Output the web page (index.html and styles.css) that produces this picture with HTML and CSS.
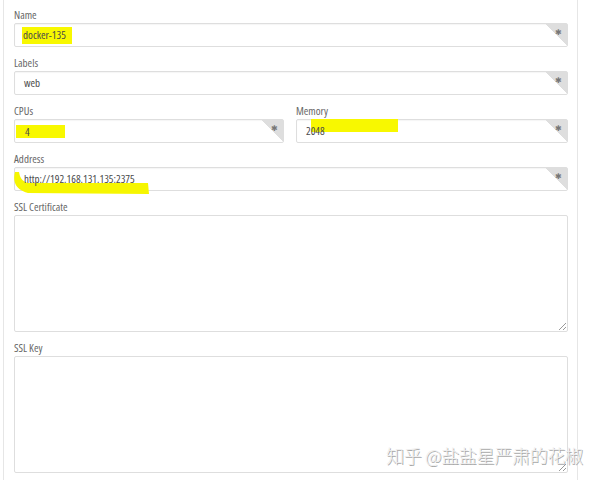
FILE: index.html
```html
<!DOCTYPE html>
<html>
<head>
<meta charset="utf-8">
<link rel="stylesheet" href="styles.css">
</head>
<body>
<div class="page">
  <div class="panel">
    <div class="field">
      <label class="label">Name</label>
      <div class="input required"><span class="hl hl-name">docker-135</span></div>
    </div>
    <div class="field">
      <label class="label">Labels</label>
      <div class="input required">web</div>
    </div>
    <div class="row">
      <div class="field">
        <label class="label">CPUs</label>
        <div class="input required"><span class="hl hl-cpu">4</span></div>
      </div>
      <div class="field">
        <label class="label">Memory</label>
        <div class="input required"><span class="hl-mem"></span><span class="mem-val">2048</span></div>
      </div>
    </div>
    <div class="field">
      <label class="label">Address</label>
      <div class="input required">
        <svg class="swoosh" width="150" height="32" viewBox="0 0 150 32"><path d="M3 2 C 1 10, 2 19, 16 23 L 137 24 L 136 13 L 16 13 C 10 11, 8 8, 7 2 Z" fill="#f6f600"/></svg>
        <span class="addr">http://192.168.131.135:2375</span>
      </div>
    </div>
    <div class="field">
      <label class="label">SSL Certificate</label>
      <div class="textarea"><span class="grip"></span></div>
    </div>
    <div class="field">
      <label class="label">SSL Key</label>
      <div class="textarea"><span class="grip"></span></div>
    </div>
  </div>
  <div class="watermark">知乎 @盐盐星严肃的花椒</div>
</div>
</body>
</html>
```
FILE: styles.css
```css
html, body {
  margin: 0;
  padding: 0;
  background: #fff;
}
body {
  font-family: "Open Sans", "Liberation Sans", sans-serif;
  font-stretch: 85%;
  color: #333;
}
.page {
  position: relative;
  width: 600px;
  height: 480px;
  overflow: hidden;
}
.panel {
  margin-left: 3px;
  width: 575px;
  height: 480px;
  box-sizing: border-box;
  border-left: 1px solid #e6e6e6;
  border-right: 1px solid #e6e6e6;
  padding: 7px 9px 0 10px;
  display: flex;
  flex-direction: column;
  gap: 8px;
}
.row {
  display: flex;
  gap: 12px;
}
.row .field {
  flex: 1;
}
.row .field:first-child {
  flex: 0 0 270px;
}
.field {
  display: flex;
  flex-direction: column;
}
.label {
  height: 16px;
  line-height: 16px;
  font-size: 11px;
  color: #666;
}
.input {
  position: relative;
  height: 24px;
  box-sizing: border-box;
  border: 1px solid #dedede;
  border-radius: 2px;
  box-shadow: inset 0 1px 1px rgba(0,0,0,0.04);
  padding: 0 9px;
  font-size: 11px;
  line-height: 22px;
  color: #4a4a4a;
  display: flex;
  align-items: center;
}
.required::after {
  content: "\2731";
  position: absolute;
  top: 0;
  right: 0;
  width: 22px;
  height: 22px;
  background: linear-gradient(to bottom left, #dedede 50%, transparent 50%);
  color: #777;
  font-size: 8px;
  line-height: 8px;
  text-align: right;
  padding: 4px 5px 0 0;
  box-sizing: border-box;
}
.hl {
  background: #f8f800;
}
.hl-name {
  padding: 2px 6px 3px 1px;
  margin-left: -2px;
  line-height: 12px;
}
.hl-cpu {
  line-height: 12px;
  padding: 1px 35px 0 9px;
  margin-left: -8px;
}
.hl-mem {
  position: absolute;
  left: 14px;
  top: -1px;
  width: 87px;
  height: 13px;
  background: #f8f800;
}
.mem-val {
  position: relative;
}
.swoosh {
  position: absolute;
  left: -3px;
  top: 2px;
}
.addr {
  position: relative;
}
.textarea {
  position: relative;
  height: 117px;
  box-sizing: border-box;
  border: 1px solid #dedede;
  border-radius: 2px;
}
.grip {
  position: absolute;
  right: 1px;
  bottom: 1px;
  width: 7px;
  height: 7px;
  background: linear-gradient(135deg, transparent 45%, #999 45%, #999 55%, transparent 55%, transparent 75%, #999 75%, #999 85%, transparent 85%);
}
.watermark {
  position: absolute;
  left: 386px;
  top: 443px;
  font-family: "Noto Sans CJK SC", sans-serif;
  font-stretch: normal;
  font-weight: 300;
  font-size: 18px;
  line-height: 24px;
  color: #eeeeee;
  text-shadow: 1px 1px 0 #a8a8a8;
  letter-spacing: -0.3px;
  white-space: nowrap;
}
```
